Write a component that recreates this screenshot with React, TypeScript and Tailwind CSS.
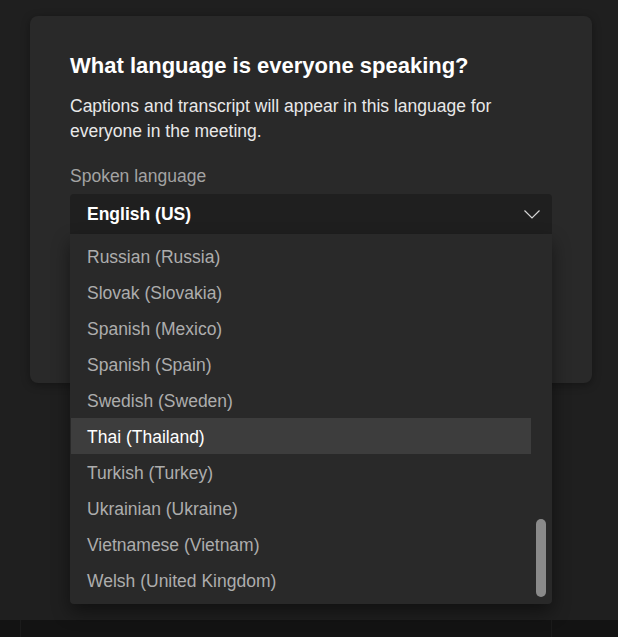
const languages = [
  'Russian (Russia)',
  'Slovak (Slovakia)',
  'Spanish (Mexico)',
  'Spanish (Spain)',
  'Swedish (Sweden)',
  'Thai (Thailand)',
  'Turkish (Turkey)',
  'Ukrainian (Ukraine)',
  'Vietnamese (Vietnam)',
  'Welsh (United Kingdom)',
]

export default function App() {
  const active = 'Thai (Thailand)'

  return (
    <div className="relative h-[637px] w-[618px] overflow-hidden bg-[#1f1f1f] font-['Liberation_Sans',Arial,sans-serif]">
      <div className="pl-[30px] pt-[16px]">
        <div className="h-[367px] w-[562px] rounded-lg bg-[#292929] px-10 pt-[36px] shadow-[0_2px_8px_rgba(0,0,0,0.35)]">
          <h1 className="text-[22px] font-bold leading-[28px] text-white">
            What language is everyone speaking?
          </h1>
          <p className="mt-[14px] text-[17.5px] leading-[25px] text-[#e8e8e8]">
            Captions and transcript will appear in this language for everyone in the meeting.
          </p>
          <div className="mt-5 text-[17.5px] leading-[25px] text-[#a3a3a3]">Spoken language</div>

          <div className="relative mt-[5px]">
            <div className="flex h-10 items-center justify-between rounded-t bg-[#1f1f1f] pl-[17px] pr-3">
              <span className="pt-px text-[17.5px] font-bold text-white">English (US)</span>
              <svg width="16" height="9" viewBox="0 0 16 9" fill="none" className="mt-px">
                <polyline points="0.5,0.5 8,8 15.5,0.5" stroke="#d6d6d6" strokeWidth="1.2" />
              </svg>
            </div>

            <div className="absolute left-0 right-0 top-10 z-10 flex rounded-b bg-[#292929] pb-[6px] pl-px pt-1 shadow-[0_8px_18px_rgba(0,0,0,0.45)]">
              <ul className="flex-1">
                {languages.map(lang => (
                  <li
                    key={lang}
                    className={
                      lang === active
                        ? 'flex h-9 items-center bg-[#3d3d3d] pl-4 pt-[2px] text-[17.5px] text-white'
                        : 'flex h-9 items-center pl-4 pt-[2px] text-[17.5px] text-[#adadad]'
                    }
                  >
                    {lang}
                  </li>
                ))}
              </ul>
              <div className="flex w-[21px] flex-col justify-end pb-px pl-[5px]">
                <div className="h-[78px] w-[10px] rounded-full bg-[#8a8a8a]" />
              </div>
            </div>
          </div>
        </div>
      </div>

      <div className="absolute bottom-0 left-0 right-0 flex h-[17px] bg-[#131313]">
        <div className="w-[20px]" />
        <div className="w-px bg-[#1b1b1b]" />
        <div className="w-[530px]" />
        <div className="w-px bg-[#1b1b1b]" />
      </div>
    </div>
  )
}
